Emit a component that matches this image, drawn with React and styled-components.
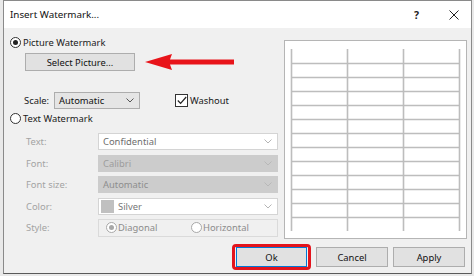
import React from "react";
import styled, { createGlobalStyle } from "styled-components";

const Global = createGlobalStyle`
  html, body { margin: 0; padding: 0; background: #e9e9e9; }
  body { font-family: "Noto Sans", "Segoe UI", sans-serif; font-size: 9.4px; color: #1a1a1a; }
  * { box-sizing: border-box; }
`;

const Dialog = styled.div`
  margin-left: 3px;
  width: 469px;
  height: 274px;
  border: 1px solid #8a8a8a;
  border-bottom-color: #5a5a5a;
  background: #f0f0f0;
  display: flex;
  flex-direction: column;
`;

const TitleBar = styled.div`
  height: 27px;
  background: #ffffff;
  display: flex;
  align-items: center;
  padding-left: 6px;
  padding-right: 12px;
  font-size: 9.8px;
  color: #111;
`;

const Title = styled.div`
  flex: 1;
`;

const Help = styled.span`
  font-weight: 700;
  font-size: 10.5px;
  margin-right: 30px;
  color: #222;
`;

const Main = styled.div`
  display: flex;
  padding: 8px 4px 0 6px;
  gap: 6px;
`;

const LeftCol = styled.div`
  width: 271px;
  display: flex;
  flex-direction: column;
`;

const RadioRow = styled.label`
  display: flex;
  align-items: center;
  height: 12px;
  gap: 2px;
  margin-top: ${(p) => p.$mt || 0}px;
  color: #1a1a1a;
`;

const RadioDot = styled.span`
  width: 11px;
  height: 11px;
  border-radius: 50%;
  border: 1px solid ${(p) => (p.$muted ? "#a8a8a8" : "#333")};
  background: #fff;
  display: flex;
  align-items: center;
  justify-content: center;
  flex-shrink: 0;
  &::after {
    content: "";
    width: 5px;
    height: 5px;
    border-radius: 50%;
    background: ${(p) => (p.$checked ? (p.$muted ? "#a8a8a8" : "#222") : "transparent")};
  }
`;

const ButtonRow = styled.div`
  display: flex;
  align-items: center;
  gap: 10px;
  margin-top: 5px;
  padding-left: 15px;
`;

const Button = styled.button`
  font: inherit;
  height: ${(p) => p.$h || 20}px;
  width: ${(p) => p.$w}px;
  margin-left: ${(p) => p.$ml || 0}px;
  background: #e1e1e1;
  border: 1px solid ${(p) => (p.$focus ? "#0078d7" : "#adadad")};
  color: #111;
  padding: 0;
  display: flex;
  align-items: center;
  justify-content: center;
`;

const ScaleRow = styled.div`
  display: flex;
  align-items: center;
  margin-top: 21px;
  padding-left: 14px;
  height: 17px;
`;

const ScaleLabel = styled.span`
  width: 30px;
`;

const Select = styled.div`
  width: ${(p) => p.$w}px;
  height: 17px;
  display: flex;
  align-items: center;
  padding: 0 5px 0 ${(p) => (p.$pl || 4)}px;
  gap: 4px;
  border: 1px solid ${(p) => p.$border || "#adadad"};
  background: ${(p) => p.$bg || "#e5e5e5"};
  color: ${(p) => p.$color || "#111"};
`;

const SelectText = styled.span`
  flex: 1;
`;

const CheckLabel = styled.label`
  display: flex;
  align-items: center;
  gap: 2px;
  margin-left: 35px;
`;

const CheckBox = styled.span`
  width: 13px;
  height: 13px;
  border: 1px solid #333;
  background: #fff;
  display: flex;
  align-items: center;
  justify-content: center;
`;

const Form = styled.div`
  display: grid;
  grid-template-columns: 72px 180px;
  grid-auto-rows: 17px;
  row-gap: 4.5px;
  margin-top: 9px;
  padding-left: 16px;
  align-items: center;
`;

const FieldLabel = styled.span`
  color: #a3a3a3;
`;

const Swatch = styled.span`
  width: 13px;
  height: 13px;
  background: #c0c0c0;
`;

const StyleBox = styled.div`
  height: 18px;
  border: 1px solid #dadada;
  display: flex;
  align-items: center;
  padding-left: 7px;
`;

const StyleOption = styled.span`
  display: flex;
  align-items: center;
  gap: 1px;
  width: 85px;
  color: #8c8c8c;
`;

const Preview = styled.div`
  margin-top: 4px;
  width: 183px;
  height: 199px;
  background: #fff;
  border: 1px solid #b5b5b5;
`;

const Footer = styled.div`
  display: flex;
  justify-content: flex-end;
  align-items: center;
  gap: 5px;
  padding: 5px 6px 0 0;
`;

const Highlight = styled.div`
  border: 3px solid #e3141d;
  border-radius: 4px;
  padding: 0 1px;
  margin-right: -4px;
`;

const Chevron = ({ color = "#555" }) => (
  <svg width="8" height="5" viewBox="0 0 8 5">
    <path d="M0.5 0.5 L4 4 L7.5 0.5" fill="none" stroke={color} strokeWidth="1" />
  </svg>
);

const Arrow = () => (
  <svg width="90" height="16" viewBox="0 0 90 16">
    <polygon points="0,8 27,0 25,5.5 89,5.5 89,10.5 25,10.5 27,16" fill="#e8141a" />
  </svg>
);

const PageLines = () => {
  const hs = [];
  for (let i = 0; i < 12; i++) hs.push(22.5 + i * 14);
  const vs = [6.5, 62.5, 118.5, 174.5];
  return (
    <svg width="181" height="197" viewBox="0 0 181 197">
      {hs.map((y) => (
        <line key={y} x1="6" x2="175" y1={y} y2={y} stroke="#bdbdbd" strokeWidth="1.4" />
      ))}
      {vs.map((x) => (
        <line key={x} x1={x} x2={x} y1="8" y2="190" stroke="#bdbdbd" strokeWidth="1.6" />
      ))}
    </svg>
  );
};

export default function App() {
  return (
    <>
      <Global />
      <Dialog>
        <TitleBar>
          <Title>Insert Watermark...</Title>
          <Help>?</Help>
          <svg width="10" height="10" viewBox="0 0 10 10">
            <path d="M0.5 0.5 L9.5 9.5 M9.5 0.5 L0.5 9.5" stroke="#222" strokeWidth="1" />
          </svg>
        </TitleBar>
        <Main>
          <LeftCol>
            <RadioRow>
              <RadioDot $checked />
              Picture Watermark
            </RadioRow>
            <ButtonRow>
              <Button $w={110} $h={18}>Select Picture...</Button>
              <Arrow />
            </ButtonRow>
            <ScaleRow>
              <ScaleLabel>Scale:</ScaleLabel>
              <Select $w={86}>
                <SelectText>Automatic</SelectText>
                <Chevron />
              </Select>
              <CheckLabel>
                <CheckBox>
                  <svg width="10" height="9" viewBox="0 0 10 9">
                    <path d="M0.8 4.5 L3.6 7.4 L9.2 1" fill="none" stroke="#222" strokeWidth="1.2" />
                  </svg>
                </CheckBox>
                Washout
              </CheckLabel>
            </ScaleRow>
            <RadioRow $mt={3}>
              <RadioDot />
              Text Watermark
            </RadioRow>
            <Form>
              <FieldLabel>Text:</FieldLabel>
              <Select $w={180} $bg="#ffffff" $border="#d4d4d4" $color="#6e6e6e">
                <SelectText>Confidential</SelectText>
                <Chevron color="#b5b5b5" />
              </Select>
              <FieldLabel>Font:</FieldLabel>
              <Select $w={180} $bg="#cccccc" $border="#cccccc" $color="#9c9c9c">
                <SelectText>Calibri</SelectText>
                <Chevron color="#b8b8b8" />
              </Select>
              <FieldLabel>Font size:</FieldLabel>
              <Select $w={180} $bg="#cccccc" $border="#cccccc" $color="#8e8e8e">
                <SelectText>Automatic</SelectText>
                <Chevron color="#b8b8b8" />
              </Select>
              <FieldLabel>Color:</FieldLabel>
              <Select $w={180} $bg="#ffffff" $border="#d4d4d4" $color="#777" $pl={2}>
                <Swatch />
                <SelectText>Silver</SelectText>
                <Chevron color="#b5b5b5" />
              </Select>
              <FieldLabel>Style:</FieldLabel>
              <StyleBox>
                <StyleOption>
                  <RadioDot $checked $muted />
                  Diagonal
                </StyleOption>
                <StyleOption>
                  <RadioDot $muted />
                  Horizontal
                </StyleOption>
              </StyleBox>
            </Form>
          </LeftCol>
          <Preview>
            <PageLines />
          </Preview>
        </Main>
        <Footer>
          <Highlight>
            <Button $w={71} $focus>Ok</Button>
          </Highlight>
          <Button $w={72} $ml={4}>Cancel</Button>
          <Button $w={72}>Apply</Button>
        </Footer>
      </Dialog>
    </>
  );
}
